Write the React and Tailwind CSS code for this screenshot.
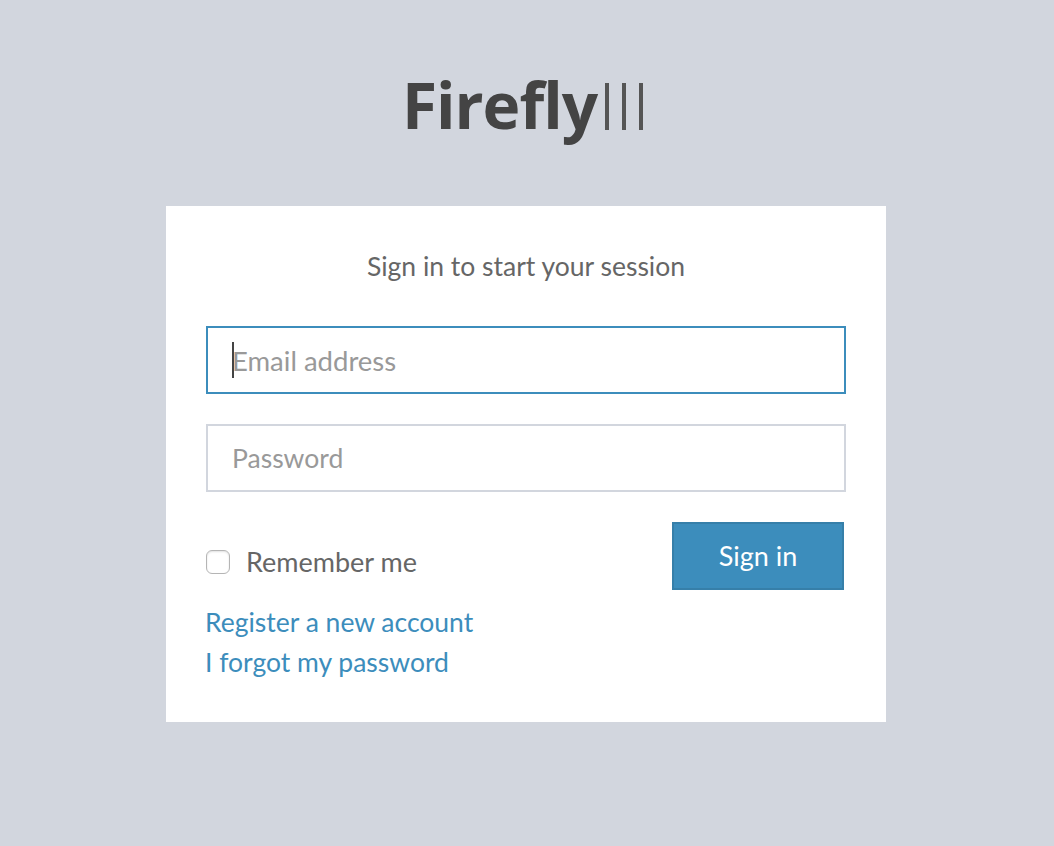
export default function App() {
    return (
        <div className="min-h-[846px] bg-[#d2d6de] font-['Lato','Liberation_Sans',sans-serif] text-[#666666]">
            <div className="w-[720px] ml-[166px] pt-[65px]">
                {/* Logo */}
                <div className="h-[141px] flex justify-center text-[#444444] leading-[80px] tracking-[-1px] pr-[7px]">
                    <b className="font-bold font-['Open_Sans',sans-serif] text-[64px]">Firefly</b>
                    <span className="ml-[8px] flex gap-[13px] pt-[18px] h-[65px]">
                        <i className="block w-[4px] h-[47px] bg-[#555555]" />
                        <i className="block w-[4px] h-[47px] bg-[#555555]" />
                        <i className="block w-[4px] h-[47px] bg-[#555555]" />
                    </span>
                </div>

                {/* Login box */}
                <div className="bg-white h-[516px] px-10 pt-[40px]">
                    <p className="text-center text-[26.5px] leading-[41px] h-[80px] text-[#666666]">Sign in to start your session</p>

                    <div className="relative mb-[30px]">
                        <input
                            type="email"
                            placeholder="Email address"
                            className="block w-full h-[68px] border-2 border-[#3c8dbc] px-6 text-[27.5px] outline-none placeholder:text-[#999999]"
                        />
                        <span className="absolute left-[26px] top-[16px] w-[2px] h-[36px] bg-[#444444]" />
                    </div>
                    <input
                        type="password"
                        placeholder="Password"
                        className="block w-full h-[68px] border-2 border-[#d2d6de] px-6 text-[26.5px] outline-none placeholder:text-[#999999]"
                    />

                    <div className="flex justify-between mt-[30px] pr-[2px]">
                        <label className="flex items-center gap-[16px] pt-[12px] h-[68px] text-[27px]">
                            <span className="block w-[24px] h-[24px] rounded-[6px] border border-[#b5b5b5] shadow-[inset_0_1px_2px_rgba(0,0,0,0.12)]" />
                            Remember me
                        </label>
                        <button className="w-[172px] h-[68px] bg-[#3c8dbc] border-2 border-[#367fa9] text-white text-[27px]">Sign in</button>
                    </div>

                    <div className="mt-[12px] text-[26.5px] leading-[40px] text-[#3c8dbc] -ml-px">
                        <a className="block" href="#">Register a new account</a>
                        <a className="block" href="#">I forgot my password</a>
                    </div>
                </div>
            </div>
        </div>
    )
}
